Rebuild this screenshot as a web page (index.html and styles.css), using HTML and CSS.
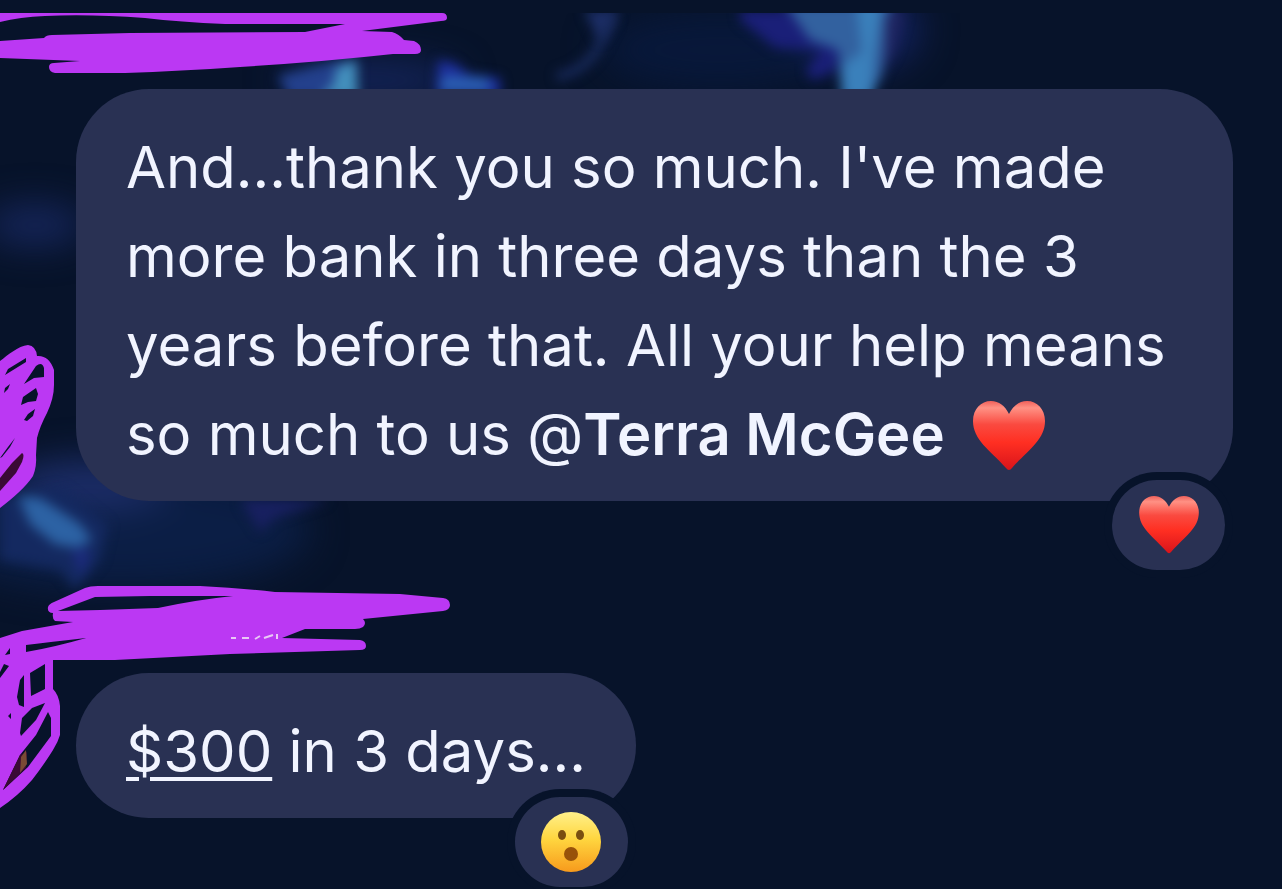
FILE: index.html
```
<!DOCTYPE html>
<html lang="en">
<head>
    <meta charset="UTF-8">
    <meta name="viewport" content="width=device-width, initial-scale=1.0">
    <title>Group Chat</title>
    <link rel="stylesheet" href="styles.css">
</head>
<body>
    <svg width="0" height="0" class="defs" aria-hidden="true">
        <defs>
            <linearGradient id="heartFill" x1="0" y1="0" x2="0" y2="1">
                <stop offset="0" stop-color="#f0605a"/>
                <stop offset="0.1" stop-color="#ff9184"/>
                <stop offset="0.34" stop-color="#fa4a40"/>
                <stop offset="0.6" stop-color="#ff2f22"/>
                <stop offset="1" stop-color="#d9141b"/>
            </linearGradient>
            <linearGradient id="faceFill" x1="0" y1="0" x2="0" y2="1">
                <stop offset="0" stop-color="#fff08a"/>
                <stop offset="0.45" stop-color="#ffd63f"/>
                <stop offset="1" stop-color="#f79a1c"/>
            </linearGradient>
            <symbol id="heart" viewBox="0 0 72 70">
                <path fill="url(#heartFill)" d="M36 13C32 5 26 0 18 0C8 0 0 8 0 20C0 39 17 49 33 67Q36 71 39 67C55 49 72 39 72 20C72 8 64 0 54 0C46 0 40 5 36 13Z"/>
            </symbol>
            <symbol id="wow" viewBox="0 0 60 60">
                <circle cx="30" cy="30" r="30" fill="url(#faceFill)"/>
                <ellipse cx="21" cy="23" rx="4" ry="5" fill="#7a4f10"/>
                <ellipse cx="39" cy="23" rx="4" ry="5" fill="#7a4f10"/>
                <ellipse cx="30" cy="42" rx="7" ry="7" fill="#985209"/>
            </symbol>
        </defs>
    </svg>

    <main class="chat">
        <svg class="wallpaper" viewBox="0 13 1282 876" aria-hidden="true">
            <defs>
                <filter id="soft" x="-50%" y="-50%" width="200%" height="200%" color-interpolation-filters="sRGB"><feGaussianBlur stdDeviation="6"/></filter>
                <filter id="haze" x="-50%" y="-50%" width="200%" height="200%" color-interpolation-filters="sRGB"><feGaussianBlur stdDeviation="18"/></filter>
            </defs>
            <g filter="url(#haze)">
                <ellipse cx="120" cy="530" rx="190" ry="60" fill="#0b1e45"/>
                <ellipse cx="720" cy="50" rx="120" ry="40" fill="#08183a"/>
                <ellipse cx="860" cy="30" rx="60" ry="40" fill="#122260"/>
                <ellipse cx="90" cy="485" rx="80" ry="26" fill="#1c2d68"/>
                <ellipse cx="35" cy="225" rx="50" ry="20" fill="#16265c"/>
                <ellipse cx="370" cy="80" rx="90" ry="20" fill="#14245a"/>
            </g>
            <g filter="url(#soft)">
                <path fill="#1a1f78" d="M740 10H800L840 45L835 70L812 80L806 70L822 50L775 48L740 20Z"/>
                <path fill="#32619f" d="M785 4H892L885 50L882 75L870 98H842L838 50L810 40Z"/>
                <path fill="#3a80bb" d="M856 2H882L874 55L872 100H843L842 66L862 52Z"/>
                <path fill="#1f2460" d="M886 15L905 10L895 50L884 70Z"/>
                <path fill="#23408c" d="M278 76L335 62L358 60L356 98H290Z"/>
                <path fill="#4390bd" d="M336 68L356 60L358 98H318L334 84Z"/>
                <path fill="#1d2f9c" d="M438 60L456 64L468 74L500 78V96H436Z"/>
                <path fill="#2a5fb0" d="M442 76L488 78L490 92H440Z"/>
                <path fill="#142960" d="M0 500L60 488L108 525L100 560L75 590L60 570L0 560Z"/>
                <path fill="#2c62a4" d="M18 496L40 498L80 524L92 540L78 548L55 544L30 524Z"/>
                <path fill="#182060" d="M240 500H330L275 518L260 532Z"/>
                <path fill="#1c2a80" d="M72 550H90L82 578Z"/>
            </g>
            <path fill="none" stroke="#1a2c60" stroke-width="8" stroke-linecap="round" filter="url(#soft)" d="M560 76Q585 70 598 48L612 20"/>
            <path fill="#1c2e66" filter="url(#soft)" d="M584 10H620L600 42Z"/>
        </svg>

        <article class="message message-long">
            <svg class="ink ink-name" viewBox="0 13 460 62" aria-hidden="true">
                <path d="M0 13H442Q447 13 447 18Q447 21 441 21L362 31L392 32Q399 34 404 40L414 41Q421 44 421 50Q421 54 415 54L393 54Q320 62 240 67Q180 71 125 73H55Q49 72 49 67Q49 63 54 63L80 61L0 58V41L44 38Q46 35 52 35L130 33L305 32L345 24H225Q180 22 145 18Q90 14 45 16Q20 17 0 22Z"/>
            </svg>
            <svg class="ink ink-avatar" viewBox="0 340 60 170" aria-hidden="true">
                <path fill-rule="evenodd" d="M0 361C8 355 18 346 28 345Q36 346 37 356Q49 355 54 370V385Q54 398 47 413Q40 426 37 438L36 455Q37 466 33 476C26 487 14 497 0 508ZM5 375L8 369L26 358V362ZM4 393L5 388L10 384L8 389ZM24 384L36 366Q42 361 44 368L44 377L34 378ZM21 405L23 397L36 388L38 394L36 401L28 402ZM24 420L28 414L35 409L33 416L27 421ZM0 458L8 447L15 438L10 447L2 457Z"/>
                <path class="shade" d="M0 478L12 463L22 453Q25 454 22 462L16 473L0 491Z"/>
            </svg>
            <div class="bubble">
                <p>And...thank you so much. I've made more bank in three days than the 3 years before that. All your help means so much to us <a class="mention" href="#"><span class="at">@</span>Terra McGee</a> <svg class="emoji" role="img" aria-label="Red heart"><use href="#heart"/></svg></p>
                <button class="reaction" type="button" aria-label="Heart reaction"><svg class="reaction-heart"><use href="#heart"/></svg></button>
            </div>
        </article>

        <article class="message message-short">
            <svg class="ink ink-both" viewBox="0 580 460 235" aria-hidden="true">
                <path fill-rule="evenodd" d="M48 607Q49 604 54 602L85 588Q90 586 98 586H200Q240 588 275 592L400 594L443 598Q450 599 450 605Q450 610 443 611L363 619Q367 623 363 627Q360 629 355 629H305L282 638L360 640Q366 641 366 646Q366 650 360 650L230 654L115 660H53L53 689Q59 695 60 706V735Q58 742 53 750Q43 766 32 780Q18 796 0 808V638L22 631L73 622L55 621Q52 619 53 613Q47 613 48 607ZM58 611L95 597L150 596H233Q195 600 158 608L100 610ZM26 652V645Q50 642 86 638Q55 647 26 652ZM30 673L45 664V689L31 696ZM17 697L20 680L24 675L24 707L19 705ZM20 733L22 718L32 708L45 703L36 720L21 736ZM3 790L20 755L36 735L48 712L51 718V736L28 767ZM5 655L10 648V654ZM0 672L4 664L9 666L0 678ZM8 716L11 713V719Z"/>
                <path class="shade" d="M3 790L20 755L27 752L26 768Z"/>
                <path class="skin" d="M21 757L26 750L27 764L20 773Z"/>
                <path class="speck" d="M231 638H236M242 638H249M255 639L260 636M264 638L273 635M277 634V639"/>
            </svg>
            <div class="bubble">
                <p><a class="amount" href="#">$300</a> in 3 days...</p>
                <button class="reaction" type="button" aria-label="Surprised reaction"><svg class="reaction-face"><use href="#wow"/></svg></button>
            </div>
        </article>
    </main>
</body>
</html>
```
FILE: styles.css
```
* {
    box-sizing: border-box;
}
body {
    margin: 0;
    padding-top: 13px;
    background-color: #07132a;
    color: #f1f4ff;
    font-family: Inter, "Liberation Sans", sans-serif;
    font-size: 58px;
    line-height: 89px;
}
.defs {
    position: absolute;
}
.chat {
    position: relative;
    min-height: calc(100vh - 13px);
    overflow: hidden;
    display: flex;
    flex-direction: column;
    gap: 96px;
}
.wallpaper {
    position: absolute;
    top: 0;
    left: 0;
    width: 1282px;
    height: 876px;
}
.message {
    position: relative;
    display: flex;
    padding: 76px 49px 0 76px;
}
.bubble {
    position: relative;
    padding: 34px 50px 22px;
    border-radius: 73px;
    background-color: #293153;
}
.bubble p {
    margin: 0;
}
.mention {
    color: inherit;
    font-weight: 600;
    text-decoration: none;
}
.at {
    font-weight: 400;
}
.amount {
    color: inherit;
    text-decoration-thickness: 4px;
    text-underline-offset: 5px;
}
.emoji {
    width: 72px;
    height: 70px;
    margin: -8px 0 -8px 12px;
    vertical-align: -8px;
}
/* reaction pill hangs over the bubble's lower edge */
.reaction {
    position: absolute;
    right: 8px;
    bottom: -69px;
    display: flex;
    align-items: center;
    justify-content: center;
    width: 113px;
    height: 90px;
    padding: 0;
    border: 0;
    border-radius: 45px;
    background-color: #293153;
    box-shadow: 0 0 0 8px #07132a;
    cursor: pointer;
}
.reaction-heart {
    width: 60px;
    height: 58px;
}
.reaction-face {
    width: 60px;
    height: 60px;
}
/* marker strokes */
.ink {
    position: absolute;
    left: 0;
    fill: #bb38f3;
}
.ink-name {
    top: 0;
    width: 460px;
    height: 62px;
}
.ink-avatar {
    top: 327px;
    width: 60px;
    height: 170px;
}
.ink-both {
    top: -17px;
    width: 460px;
    height: 235px;
}
.shade {
    fill: #3a0a35;
}
.skin {
    fill: #7a4a35;
}
.speck {
    fill: none;
    stroke: #e9c8f5;
    stroke-width: 2;
}
```
